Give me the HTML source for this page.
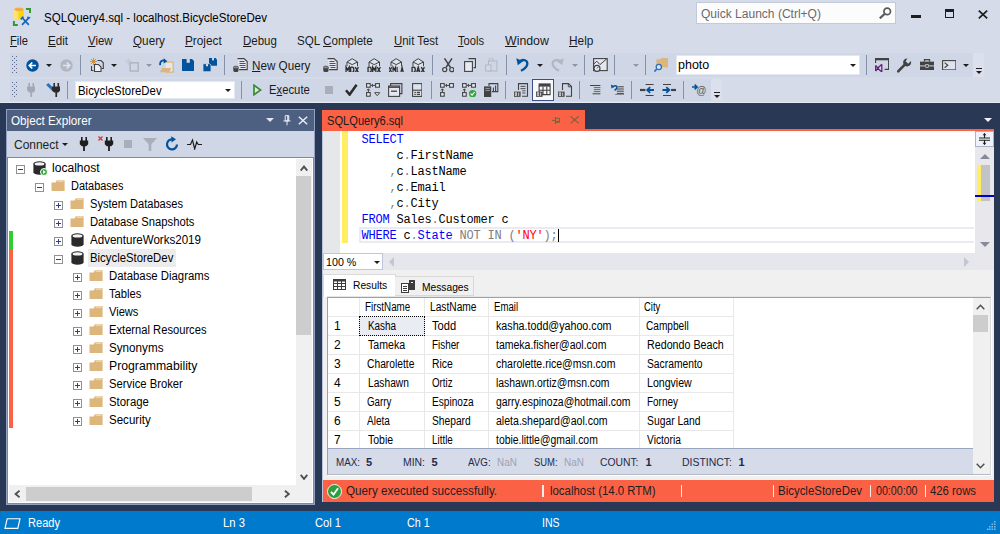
<!DOCTYPE html>
<html><head>
<meta charset="utf-8">
<title>SQLQuery4.sql - localhost.BicycleStoreDev</title>
<style>
*{box-sizing:border-box;margin:0;padding:0}
html,body{width:1000px;height:534px;overflow:hidden;background:#d6dbe9}
body{font-family:"Liberation Sans",sans-serif;font-size:12px;color:#1e1e1e;position:relative}
.a{position:absolute}
.t{position:absolute;white-space:nowrap;line-height:16px;height:16px}
u{text-decoration:underline;text-underline-offset:1px}
/* top chrome */
#chrome{left:0;top:0;width:1000px;height:103px;background:#d6dbe9}
.tb{background:#cfd6e5}
.sep{width:1px;background:#8591a9}
.grip{width:5px;background-image:radial-gradient(circle,#6d7993 0.6px,transparent 0.8px);background-size:4px 4px;background-position:0 0}
/* navy work area */
#work{left:0;top:103px;width:1000px;height:408px;background:#293955}
/* status */
#status{left:0;top:511px;width:1000px;height:23px;background:#007acc;color:#fff}
/* tree */
.tr{position:absolute;white-space:nowrap;line-height:18px;height:18px;font-size:12px;color:#000}
.bx{position:absolute;width:9px;height:9px;border:1px solid #919191;background:#fff}
.bx:before{content:"";position:absolute;left:1px;top:3px;width:5px;height:1px;background:#2b3f8c}
.bx.p:after{content:"";position:absolute;left:3px;top:1px;width:1px;height:5px;background:#2b3f8c}
.fo{position:absolute;width:14px;height:11px}
.code{position:absolute;white-space:pre;font-family:"Liberation Mono",monospace;font-size:12px;letter-spacing:-0.2px;line-height:16px;height:16px;color:#000}
.kw{color:#0000ff}.gr{color:#808080}.rd{color:#ff0000}
.g{position:absolute;white-space:nowrap;font-size:12px;line-height:19px;height:19px;color:#000}
.vl{position:absolute;width:1px;background:#e8e8e8}
.hl{position:absolute;height:1px;background:#e8e8e8}
.ag{position:absolute;white-space:nowrap;font-size:11px;line-height:22px;height:22px;color:#1e2a4a}
.ag b{color:#1e2a4a}
.ag i{font-style:normal;color:#9aa2b5}
.qs{position:absolute;white-space:nowrap;font-size:12px;line-height:22px;height:22px;color:#1e1e1e}
.qsep{position:absolute;width:1.5px;height:12px;background:#fdeee9}
</style>
</head>
<body>
<!-- ============ TOP CHROME ============ -->
<div class="a" id="chrome">
<svg class="a" style="left:12px;top:7px;width:20px;height:20px" viewBox="0 0 20 20"><path d="M1.900 2.400V11.600L6.300 12.900V4z" fill="#ffe36e"></path><path d="M6.300 4V12.900L9.500 11.300L11.900 9V2.400z" fill="#ffd500"></path><path d="M1.900 2.300L4.200 0.800H9.800L11.900 2.300L9.800 3.900H4.200Z" fill="#f3aa3e"></path>
<path d="M14 2H18V5.900" stroke="#339933" stroke-width="2" fill="none"></path><path d="M1.900 14V17.900H5.800" stroke="#339933" stroke-width="2" fill="none"></path>
<path d="M10 10.500L16.800 17.800M17.500 10.200L10 17.800" stroke="#1565c0" stroke-width="1.700" fill="none"></path><path d="M8.200 11.800L10.800 9L12 10.200L9.500 12.900Z" fill="#1565c0"></path><path d="M15.600 9.200L16.800 10.500L18.800 9.800L17 12L15 11z" fill="#1565c0"></path></svg>
<div class="t" style="left: 44px; top: 10px; font-size: 12.5px; color: rgb(0, 0, 0); transform-origin: 0px 50%; transform: scaleX(0.925);">SQLQuery4.sql - localhost.BicycleStoreDev</div>
<div class="a" style="left:696px;top:2px;width:200px;height:21.500px;background:#fcfcfd;border:1px solid #c2c9da"></div>
<div class="t" style="left: 701px; top: 6.2px; font-size: 12px; color: rgb(106, 106, 106); transform-origin: 0px 50%; transform: scaleX(1.0023);">Quick Launch (Ctrl+Q)</div>
<svg class="a" style="left:879px;top:7px;width:13px;height:12px" viewBox="0 0 13 12"><circle cx="8.2" cy="4.4" r="3.3" stroke="#5a5a5a" stroke-width="1.7" fill="none"></circle><path d="M5.8 6.8L0.8 11.4" stroke="#5a5a5a" stroke-width="2.2"></path></svg>
<div class="a" style="left:911px;top:14.5px;width:9.5px;height:3px;background:#1e1e1e"></div>
<div class="a" style="left:945px;top:9px;width:9px;height:9px;border:1px solid #1e1e1e;border-top-width:3px"></div>
<svg class="a" style="left:978px;top:10px;width:10px;height:9px" viewBox="0 0 10 9"><path d="M0.8 0.6L9.2 8.4M9.2 0.6L0.8 8.4" stroke="#1e1e1e" stroke-width="1.7"></path></svg>
<div class="t" style="left: 10px; top: 33px; font-size: 12px; color: rgb(27, 27, 27); transform-origin: 0px 50%; transform: scaleX(0.9349);"><u>F</u>ile</div>
<div class="t" style="left: 47.7px; top: 33px; font-size: 12px; color: rgb(27, 27, 27); transform-origin: 0px 50%; transform: scaleX(0.9709);"><u>E</u>dit</div>
<div class="t" style="left: 88.4px; top: 33px; font-size: 12px; color: rgb(27, 27, 27); transform-origin: 0px 50%; transform: scaleX(0.953);"><u>V</u>iew</div>
<div class="t" style="left: 133px; top: 33px; font-size: 12px; color: rgb(27, 27, 27); transform-origin: 0px 50%; transform: scaleX(0.9759);"><u>Q</u>uery</div>
<div class="t" style="left: 185.2px; top: 33px; font-size: 12px; color: rgb(27, 27, 27); transform-origin: 0px 50%; transform: scaleX(0.9824);"><u>P</u>roject</div>
<div class="t" style="left: 242.5px; top: 33px; font-size: 12px; color: rgb(27, 27, 27); transform-origin: 0px 50%; transform: scaleX(0.9583);"><u>D</u>ebug</div>
<div class="t" style="left: 297.2px; top: 33px; font-size: 12px; color: rgb(27, 27, 27); transform-origin: 0px 50%; transform: scaleX(0.9683);">SQL <u>C</u>omplete</div>
<div class="t" style="left: 393.6px; top: 33px; font-size: 12px; color: rgb(27, 27, 27); transform-origin: 0px 50%; transform: scaleX(0.9509);"><u>U</u>nit Test</div>
<div class="t" style="left: 458.4px; top: 33px; font-size: 12px; color: rgb(27, 27, 27); transform-origin: 0px 50%; transform: scaleX(0.9316);"><u>T</u>ools</div>
<div class="t" style="left: 505.1px; top: 33px; font-size: 12px; color: rgb(27, 27, 27); transform-origin: 0px 50%; transform: scaleX(1.0284);"><u>W</u>indow</div>
<div class="t" style="left: 569.1px; top: 33px; font-size: 12px; color: rgb(27, 27, 27); transform-origin: 0px 50%; transform: scaleX(0.9884);"><u>H</u>elp</div>
<div class="a tb" style="left:10px;top:53px;width:963px;height:24px"></div>
<div class="a" style="left:973px;top:53px;width:11px;height:24px;background:#dce0ec"></div>
<svg class="a" style="left:12px;top:56px;width:5px;height:18px" viewBox="0 0 5 18"><g fill="#5d6b8c"><rect x="0" y="0" width="1" height="1"></rect><rect x="4" y="0" width="1" height="1"></rect><rect x="2" y="2" width="1" height="1"></rect><rect x="6" y="2" width="1" height="1"></rect><rect x="0" y="4" width="1" height="1"></rect><rect x="4" y="4" width="1" height="1"></rect><rect x="2" y="6" width="1" height="1"></rect><rect x="6" y="6" width="1" height="1"></rect><rect x="0" y="8" width="1" height="1"></rect><rect x="4" y="8" width="1" height="1"></rect><rect x="2" y="10" width="1" height="1"></rect><rect x="6" y="10" width="1" height="1"></rect><rect x="0" y="12" width="1" height="1"></rect><rect x="4" y="12" width="1" height="1"></rect><rect x="2" y="14" width="1" height="1"></rect><rect x="6" y="14" width="1" height="1"></rect><rect x="0" y="16" width="1" height="1"></rect><rect x="4" y="16" width="1" height="1"></rect></g></svg>
<svg class="a" style="left:25.5px;top:58.5px;width:13px;height:13px" viewBox="0 0 13 13"><circle cx="6.5" cy="6.5" r="6.2" fill="#00539c"></circle><path d="M10 6.5H3.6M6.3 3.5L3.3 6.5L6.3 9.5" stroke="#fff" stroke-width="1.7" fill="none"></path></svg>
<div class="a" style="left:46px;top:64px;width:0;height:0;border-top:3px solid #1e1e1e;border-left:3px solid transparent;border-right:3px solid transparent"></div>
<svg class="a" style="left:59.7px;top:58.5px;width:13px;height:13px" viewBox="0 0 13 13"><circle cx="6.5" cy="6.5" r="6.2" fill="#b3b7c4"></circle><path d="M3 6.5h6.4M6.7 3.5L9.7 6.5L6.7 9.5" stroke="#dfe3ee" stroke-width="1.7" fill="none"></path></svg>
<div class="a sep" style="left:80px;top:55px;height:20px"></div>
<svg class="a" style="left:90px;top:58px;width:14px;height:14px" viewBox="0 0 14 14"><path d="M3.5 0v7M0 3.5h7M1 1l5 5M6 1l-5 5" stroke="#d68a1b" stroke-width="0.9"></path><path d="M7.5 2.5h3.5l2.3 2.3v5.7h-2" stroke="#424242" stroke-width="1.1" fill="none"></path><path d="M4.5 6.5h4l2.5 2.5v4.5h-6.500z" stroke="#424242" stroke-width="1.1" fill="#eef0f6"></path><path d="M1.5 8v4.5h2" stroke="#424242" stroke-width="1.1" fill="none"></path></svg>
<div class="a" style="left:111px;top:64px;width:0;height:0;border-top:3px solid #1e1e1e;border-left:3px solid transparent;border-right:3px solid transparent"></div>
<svg class="a" style="left:125px;top:58px;width:14px;height:14px" viewBox="0 0 14 14"><path d="M3.5 0v7M0 3.5h7M1 1l5 5M6 1l-5 5" stroke="#c4c8d4" stroke-width="0.9"></path><rect x="5.2" y="4.8" width="8" height="8.2" stroke="#b3b7c4" stroke-width="1.6" fill="none"></rect></svg>
<div class="a" style="left:146px;top:64px;width:0;height:0;border-top:3px solid #8f95a6;border-left:3px solid transparent;border-right:3px solid transparent"></div>
<svg class="a" style="left:158.5px;top:57.5px;width:15px;height:15px" viewBox="0 0 15 15"><path d="M6.5 4.2h7.7v10H6.5" stroke="#dcb67a" stroke-width="1.3" fill="#e4e7f0"></path><path d="M0.8 14.2L3.2 10h9.2l-2.200 4.200z" fill="#dcb67a"></path><path d="M1.2 7.2C0.500 3 3.500 1.800 6.200 2.800" stroke="#00539c" stroke-width="1.800" fill="none"></path><path d="M4.800 0.300L8.300 3.200L4.600 5.600Z" fill="#00539c"></path></svg>
<svg class="a" style="left:182px;top:58.7px;width:12px;height:12px" viewBox="0 0 12 12"><path d="M0 0h10l2 2v10H0z" fill="#00539c"></path><rect x="4.600" y="0" width="3.200" height="3.800" fill="#cfd6e5"></rect></svg>
<svg class="a" style="left:203px;top:58px;width:14px;height:14px" viewBox="0 0 14 14"><path d="M6 0h6.600l1.400 1.400v6.400H6z" fill="#00539c"></path><rect x="9" y="0" width="2" height="2.400" fill="#cfd6e5"></rect><path d="M0 5.700h6.600l1.400 1.400v6.600H0z" fill="#00539c" stroke="#cfd6e5" stroke-width="0.8"></path><rect x="3" y="5.900" width="2" height="2.400" fill="#cfd6e5"></rect></svg>
<div class="a sep" style="left:224px;top:55px;height:20px"></div>
<svg class="a" style="left:232.7px;top:57.7px;width:15px;height:14.5px" viewBox="0 0 15 14.5"><path d="M4.500 0.600h6.500l3.200 3v8h-8" stroke="#424242" stroke-width="1.1" fill="#e3e6ef"></path><path d="M6.500 3.500h5M6.500 5.500h6M6.500 7.500h6M7.500 9.500h5" stroke="#424242" stroke-width="0.9"></path><path d="M0.300 9.500v3.300a2.600 1.300 0 0 0 5.200 0V9.500z" fill="#424242"></path><ellipse cx="2.900" cy="9.400" rx="2.600" ry="1.300" fill="#8a8a8a" stroke="#424242" stroke-width="0.6"></ellipse></svg>
<div class="t" style="left: 252.2px; top: 58px; font-size: 12px; color: rgb(27, 27, 27); transform-origin: 0px 50%; transform: scaleX(0.9728);"><u>N</u>ew Query</div>
<svg class="a" style="left:322.5px;top:57.7px;width:15px;height:14.5px" viewBox="0 0 15 14.5"><path d="M4.500 0.600h6.500l3.200 3v8h-8" stroke="#424242" stroke-width="1.1" fill="#e3e6ef"></path><path d="M6.500 3.500h5M6.500 5.500h6M6.500 7.500h6M7.500 9.500h5" stroke="#424242" stroke-width="0.9"></path><path d="M0.300 9.500v3.300a2.600 1.300 0 0 0 5.200 0V9.500z" fill="#424242"></path><ellipse cx="2.900" cy="9.400" rx="2.600" ry="1.300" fill="#8a8a8a" stroke="#424242" stroke-width="0.6"></ellipse></svg>
<svg class="a" style="left:344.7px;top:57.7px;width:14.5px;height:14.5px" viewBox="0 0 14.5 14.5"><path d="M2 8.200V4L7.200 0.700L12.500 4V8.200" stroke="#424242" stroke-width="1" fill="#dfe3ee"></path><path d="M2 4L7.200 6.600L12.500 4" stroke="#424242" stroke-width="1" fill="none"></path><g stroke="#2e2e2e" stroke-width="1.300" fill="none"><path transform="translate(1.05 9.100) scale(1.0 1.080)" d="M0 5V0L1.6 2.6L3.200 0V5"></path><path transform="translate(5.65 9.100) scale(1.0 1.080)" d="M0 0V5H1.400Q3.200 5 3.200 2.500Q3.200 0 1.400 0H0"></path><path transform="translate(10.25 9.100) scale(1.0 1.080)" d="M0 0L3.200 5M3.200 0L0 5"></path></g></svg>
<svg class="a" style="left:366.7px;top:57.7px;width:14.5px;height:14.5px" viewBox="0 0 14.5 14.5"><path d="M2 8.200V4L7.200 0.700L12.500 4V8.200" stroke="#424242" stroke-width="1" fill="#dfe3ee"></path><path d="M2 4L7.200 6.600L12.500 4" stroke="#424242" stroke-width="1" fill="none"></path><g stroke="#2e2e2e" stroke-width="1.300" fill="none"><path transform="translate(1.05 9.100) scale(1.0 1.080)" d="M0 0V5H1.400Q3.200 5 3.200 2.500Q3.200 0 1.400 0H0"></path><path transform="translate(5.65 9.100) scale(1.0 1.080)" d="M0 5V0L1.6 2.6L3.200 0V5"></path><path transform="translate(10.25 9.100) scale(1.0 1.080)" d="M0 0L3.200 5M3.200 0L0 5"></path></g></svg>
<svg class="a" style="left:389px;top:57.7px;width:14.5px;height:14.5px" viewBox="0 0 14.5 14.5"><path d="M2 8.200V4L7.200 0.700L12.500 4V8.200" stroke="#424242" stroke-width="1" fill="#dfe3ee"></path><path d="M2 4L7.200 6.600L12.500 4" stroke="#424242" stroke-width="1" fill="none"></path><g stroke="#2e2e2e" stroke-width="1.300" fill="none"><path transform="translate(0.09 9.100) scale(0.82 1.080)" d="M0 0L3.200 5M3.200 0L0 5"></path><path transform="translate(3.99 9.100) scale(0.82 1.080)" d="M0 5V0L1.6 2.6L3.200 0V5"></path><path transform="translate(7.89 9.100) scale(0.82 1.080)" d="M0.300 0V5H2.800"></path><path transform="translate(11.79 9.100) scale(0.82 1.080)" d="M0 5L1.600 0L3.200 5M0.700 3.400H2.500"></path></g></svg>
<svg class="a" style="left:411px;top:57.7px;width:14.5px;height:14.5px" viewBox="0 0 14.5 14.5"><path d="M2 8.200V4L7.200 0.700L12.500 4V8.200" stroke="#424242" stroke-width="1" fill="#dfe3ee"></path><path d="M2 4L7.200 6.600L12.500 4" stroke="#424242" stroke-width="1" fill="none"></path><g stroke="#2e2e2e" stroke-width="1.300" fill="none"><path transform="translate(1.05 9.100) scale(1.0 1.080)" d="M0 0V5H1.400Q3.200 5 3.200 2.500Q3.200 0 1.400 0H0"></path><path transform="translate(5.65 9.100) scale(1.0 1.080)" d="M0 5L1.600 0L3.200 5M0.700 3.400H2.500"></path><path transform="translate(10.25 9.100) scale(1.0 1.080)" d="M0 0L3.200 5M3.200 0L0 5"></path></g></svg>
<div class="a sep" style="left:432px;top:55px;height:20px"></div>
<svg class="a" style="left:441.7px;top:58px;width:12.5px;height:14.5px" viewBox="0 0 12.5 14.5"><path d="M2.500 0.300L8.500 9.500M10 0.300L4 9.500" stroke="#424242" stroke-width="1.400" fill="none"></path><circle cx="2.700" cy="11.600" r="2.100" stroke="#424242" stroke-width="1.200" fill="none"></circle><circle cx="9.800" cy="11.600" r="2.100" stroke="#424242" stroke-width="1.200" fill="none"></circle></svg>
<svg class="a" style="left:464px;top:57.7px;width:12px;height:14px" viewBox="0 0 12 14"><path d="M4.500 0.600h7v9h-2" stroke="#424242" stroke-width="1.100" fill="none"></path><rect x="0.600" y="3.600" width="7.800" height="9.800" stroke="#424242" stroke-width="1.100" fill="#e8ebf3"></rect></svg>
<svg class="a" style="left:485px;top:58px;width:12.5px;height:13.5px" viewBox="0 0 12.5 13.5"><path d="M4.200 3V1.600a2 1.600 0 0 1 4 0V3" stroke="#b3b7c4" stroke-width="1" fill="none"></path><rect x="3.500" y="3" width="8.400" height="10" stroke="#b3b7c4" stroke-width="1" fill="none"></rect><rect x="0.600" y="7" width="5.400" height="6" stroke="#b3b7c4" stroke-width="1" fill="#d4d9e6"></rect></svg>
<div class="a sep" style="left:506px;top:55px;height:20px"></div>
<svg class="a" style="left:515.7px;top:57.3px;width:13px;height:14.5px" viewBox="0 0 13 14.5"><path d="M3 5C7 1.500 12 3 11.200 7.500C10.600 10.500 7.500 12.500 5 13.800" stroke="#00539c" stroke-width="2.300" fill="none"></path><path d="M0.300 1.200L1.800 8.200L7 4.200Z" fill="#00539c"></path></svg>
<div class="a" style="left:537px;top:64px;width:0;height:0;border-top:3px solid #1e1e1e;border-left:3px solid transparent;border-right:3px solid transparent"></div>
<svg class="a" style="left:550.5px;top:57.3px;width:13px;height:14.5px" viewBox="0 0 13 14.5"><path d="M10 5C6 1.500 1 3 1.800 7.500C2.400 10.500 5.500 12.500 8 13.800" stroke="#b3b7c4" stroke-width="2.300" fill="none"></path><path d="M12.700 1.200L11.200 8.200L6 4.200Z" fill="#b3b7c4"></path></svg>
<div class="a" style="left:572px;top:64px;width:0;height:0;border-top:3px solid #8f95a6;border-left:3px solid transparent;border-right:3px solid transparent"></div>
<div class="a sep" style="left:584px;top:55px;height:20px"></div>
<svg class="a" style="left:592.5px;top:58px;width:15px;height:14px" viewBox="0 0 15 14"><rect x="0.600" y="0.600" width="13.600" height="12" stroke="#424242" stroke-width="1.100" fill="#e4e7f0"></rect><path d="M0.800 6L3.800 3.200L7 6.600L13.800 0.800" stroke="#424242" stroke-width="1" fill="none"></path><circle cx="4" cy="10.400" r="3" stroke="#424242" stroke-width="1.100" fill="#e4e7f0"></circle><path d="M4 10.400L5.600 8.600" stroke="#424242" stroke-width="0.900"></path></svg>
<div class="a sep" style="left:614px;top:55px;height:20px"></div>
<div class="a" style="left:633px;top:64px;width:0;height:0;border-top:3px solid #8f95a6;border-left:3px solid transparent;border-right:3px solid transparent"></div>
<div class="a sep" style="left:645px;top:55px;height:20px"></div>
<svg class="a" style="left:654px;top:58px;width:14.5px;height:14px" viewBox="0 0 14.5 14"><path d="M2.400 1.200h4l1-1.200h6.600v9.400H2.400z" fill="#dcb67a"></path><circle cx="4.800" cy="9" r="2.600" stroke="#2a6fc0" stroke-width="1.300" fill="#dfe6f4"></circle><path d="M2.800 11L0.400 13.600" stroke="#2a6fc0" stroke-width="1.700"></path></svg>
<div class="a" style="left:675.5px;top:54.7px;width:184px;height:20.600px;background:#fff;border:1px solid #e3e7f0"></div>
<div class="t" style="left: 678.3px; top: 57px; font-size: 12px; color: rgb(0, 0, 0); transform-origin: 0px 50%; transform: scaleX(1.0422);">photo</div>
<div class="a" style="left:850.4px;top:64px;width:0;height:0;border-top:3px solid #1e1e1e;border-left:3px solid transparent;border-right:3px solid transparent"></div>
<div class="a sep" style="left:866px;top:55px;height:20px"></div>
<svg class="a" style="left:874.7px;top:58px;width:14.5px;height:14px" viewBox="0 0 14.5 14"><path d="M0.600 5V0.600h13v10.800h-4" stroke="#424242" stroke-width="1.100" fill="none"></path><path d="M0.600 1.400h13" stroke="#424242" stroke-width="1.800"></path><path d="M0.600 7.500L3.200 10.300L0.600 13.100M0.600 7.500v5.600M6.800 6.200L2.600 10.300L6.800 14M6.800 6.200V14" stroke="#68217a" stroke-width="1.300" fill="none"></path></svg>
<svg class="a" style="left:896.5px;top:58px;width:15px;height:14.5px" viewBox="0 0 15 14.5"><path d="M1.200 13.300L8 6.300" stroke="#424242" stroke-width="2.600" stroke-linecap="round"></path><path d="M13.900 3.100a4 4 0 1 1-3.400-2.700L8.600 3.200l2.600 2.500z" fill="#424242"></path></svg>
<svg class="a" style="left:919.5px;top:58.7px;width:14px;height:11.5px" viewBox="0 0 14 11.5"><path d="M4.500 2.600V0.700h5v1.900" stroke="#424242" stroke-width="1.300" fill="none"></path><rect x="0" y="2.600" width="14" height="3.800" fill="#424242"></rect><rect x="0" y="7.400" width="14" height="4.100" fill="#424242"></rect><rect x="5.800" y="5.400" width="2.400" height="3" fill="#424242" stroke="#cfd6e5" stroke-width="0.700"></rect></svg>
<svg class="a" style="left:941.7px;top:59.7px;width:14.5px;height:10.5px" viewBox="0 0 14.5 10.5"><rect x="0.600" y="0.600" width="13.300" height="9.300" stroke="#424242" stroke-width="1.100" fill="#dfe3ee"></rect><path d="M2.600 2.600L5.800 5.200L2.600 7.800" stroke="#424242" stroke-width="1.100" fill="none"></path></svg>
<div class="a" style="left:963px;top:64px;width:0;height:0;border-top:3px solid #1e1e1e;border-left:3px solid transparent;border-right:3px solid transparent"></div>
<div class="a" style="left:975.7px;top:68px;width:6.4px;height:1.300px;background:#1e1e1e"></div>
<div class="a" style="left:975.9px;top:71px;width:0;height:0;border-top:3px solid #1e1e1e;border-left:3px solid transparent;border-right:3px solid transparent"></div>
<div class="a tb" style="left:10px;top:79px;width:701px;height:22px"></div>
<div class="a" style="left:711px;top:79px;width:11px;height:22px;background:#dce0ec"></div>
<svg class="a" style="left:12px;top:82px;width:5px;height:16px" viewBox="0 0 5 16"><g fill="#5d6b8c"><rect x="0" y="0" width="1" height="1"></rect><rect x="4" y="0" width="1" height="1"></rect><rect x="2" y="2" width="1" height="1"></rect><rect x="6" y="2" width="1" height="1"></rect><rect x="0" y="4" width="1" height="1"></rect><rect x="4" y="4" width="1" height="1"></rect><rect x="2" y="6" width="1" height="1"></rect><rect x="6" y="6" width="1" height="1"></rect><rect x="0" y="8" width="1" height="1"></rect><rect x="4" y="8" width="1" height="1"></rect><rect x="2" y="10" width="1" height="1"></rect><rect x="6" y="10" width="1" height="1"></rect><rect x="0" y="12" width="1" height="1"></rect><rect x="4" y="12" width="1" height="1"></rect><rect x="2" y="14" width="1" height="1"></rect><rect x="6" y="14" width="1" height="1"></rect></g></svg>
<svg class="a" style="left:26.7px;top:83px;width:8.5px;height:14px" viewBox="0 0 8.5 14"><path d="M1.400 0h1.600v3.600H1.400zM5.500 0h1.600v3.600H5.500zM0 3.600h8.500v3.600l-2.200 2.200H2.200L0 7.200zM3.400 9h1.700v5H3.400z" fill="#a4a8b4"></path></svg>
<svg class="a" style="left:46px;top:82.5px;width:9.5px;height:9.5px" viewBox="0 0 9.5 9.5"><path d="M0.200 1.900L2.300 0L9 6.400L9.500 9.300L6.800 8.400Z" fill="#2a6fc0"></path></svg>
<svg class="a" style="left:51.7px;top:83px;width:8.5px;height:14px" viewBox="0 0 8.5 14"><path d="M1.400 0h1.600v3.600H1.400zM5.500 0h1.600v3.600H5.500zM0 3.600h8.500v3.600l-2.200 2.200H2.200L0 7.200zM3.400 9h1.700v5H3.400z" fill="#2b2b2b"></path></svg>
<div class="a sep" style="left:67px;top:81px;height:18px"></div>
<div class="a" style="left:75.300px;top:80.800px;width:159.400px;height:18.400px;background:#fff;border:1px solid #e3e7f0"></div>
<div class="t" style="left: 78.3px; top: 82.6px; font-size: 12px; color: rgb(0, 0, 0); transform-origin: 0px 50%; transform: scaleX(0.9497);">BicycleStoreDev</div>
<div class="a" style="left:225.3px;top:89.4px;width:0;height:0;border-top:3px solid #1e1e1e;border-left:3px solid transparent;border-right:3px solid transparent"></div>
<div class="a sep" style="left:241px;top:81px;height:18px"></div>
<svg class="a" style="left:252.5px;top:84px;width:9px;height:12px" viewBox="0 0 9 12"><path d="M1 1.300L7.600 6L1 10.700Z" stroke="#388a34" stroke-width="1.700" fill="#dfe8e0" stroke-linejoin="miter"></path></svg>
<div class="t" style="left: 269.4px; top: 82px; font-size: 12px; color: rgb(27, 27, 27); transform-origin: 0px 50%; transform: scaleX(0.9406);">E<u>x</u>ecute</div>
<div class="a" style="left:325px;top:86.300px;width:7.700px;height:7.500px;background:#a9aeb9"></div>
<svg class="a" style="left:345px;top:84px;width:12.5px;height:12px" viewBox="0 0 12.5 12"><path d="M1 6.200L4.600 10.600L11.600 0.800" stroke="#2b2b2b" stroke-width="2.500" fill="none"></path></svg>
<svg class="a" style="left:366px;top:83px;width:14.5px;height:14px" viewBox="0 0 14.5 14"><rect x="0.600" y="0.600" width="3.600" height="3.600" stroke="#424242" stroke-width="1.100" fill="#eef0f6"></rect><rect x="9.600" y="0.600" width="3.800" height="3.600" stroke="#424242" stroke-width="1.100" fill="#eef0f6"></rect><rect x="0.600" y="9.600" width="3.600" height="3.600" stroke="#424242" stroke-width="1.100" fill="#eef0f6"></rect><path d="M9.600 2.400H5.600M7 1L5.400 2.400L7 3.800M2.400 9.600V6M1 7.400L2.400 5.800L3.800 7.400" stroke="#424242" stroke-width="1" fill="none"></path><path d="M8.700 9.700h5l-2.500 3z" stroke="#424242" stroke-width="1" fill="#eef0f6"></path></svg>
<svg class="a" style="left:388px;top:83px;width:14.5px;height:14px" viewBox="0 0 14.5 14"><path d="M2.600 3V0.600h11.300v10h-2.400" stroke="#424242" stroke-width="1.100" fill="none"></path><rect x="0.600" y="3" width="11" height="10.400" stroke="#424242" stroke-width="1.100" fill="#e4e7f0"></rect><path d="M0.600 4.200h11" stroke="#424242" stroke-width="1.400"></path><path d="M3 8.200h6" stroke="#424242" stroke-width="1.300"></path></svg>
<svg class="a" style="left:411.5px;top:83px;width:10.5px;height:14px" viewBox="0 0 10.5 14"><rect x="0.600" y="0.600" width="9.300" height="12.800" stroke="#424242" stroke-width="1.100" fill="#dfe3ee"></rect><path d="M0.600 7.200h9.300" stroke="#424242" stroke-width="1.100"></path><path d="M2.400 9.400h1.400M4.800 9.400h3.200M2.400 11.400h1.400M4.800 11.400h3.200" stroke="#424242" stroke-width="1.100"></path></svg>
<div class="a sep" style="left:431px;top:81px;height:18px"></div>
<svg class="a" style="left:440px;top:83px;width:14.5px;height:14px" viewBox="0 0 14.5 14"><rect x="0.600" y="0.600" width="3.600" height="3.600" stroke="#424242" stroke-width="1.100" fill="#eef0f6"></rect><rect x="9.600" y="0.600" width="3.800" height="3.600" stroke="#424242" stroke-width="1.100" fill="#eef0f6"></rect><rect x="0.600" y="9.600" width="3.600" height="3.600" stroke="#424242" stroke-width="1.100" fill="#eef0f6"></rect><path d="M9.600 2.400H5.600M7 1L5.400 2.400L7 3.800M2.400 9.600V6M1 7.400L2.400 5.800L3.800 7.400" stroke="#424242" stroke-width="1" fill="none"></path></svg>
<svg class="a" style="left:462px;top:83px;width:14.5px;height:14px" viewBox="0 0 14.5 14"><rect x="0.600" y="0.600" width="3.600" height="3.600" stroke="#424242" stroke-width="1.100" fill="#eef0f6"></rect><rect x="9.600" y="0.600" width="3.800" height="3.600" stroke="#424242" stroke-width="1.100" fill="#eef0f6"></rect><rect x="0.600" y="9.600" width="3.600" height="3.600" stroke="#424242" stroke-width="1.100" fill="#eef0f6"></rect><path d="M9.600 2.400H5.600M7 1L5.400 2.400L7 3.800M2.400 9.600V6M1 7.400L2.400 5.800L3.800 7.400" stroke="#424242" stroke-width="1" fill="none"></path><circle cx="10.600" cy="10.600" r="3.700" fill="#2fa83a"></circle><path d="M8.600 10.600L10.100 12.200L12.600 9" stroke="#fff" stroke-width="1.200" fill="none"></path></svg>
<svg class="a" style="left:484px;top:83px;width:14.5px;height:14px" viewBox="0 0 14.5 14"><rect x="0" y="3.400" width="7.200" height="10.600" fill="#424242"></rect><path d="M1.400 5.400h4.400M1.400 7.400h4.400" stroke="#aeb4c4" stroke-width="0.800"></path><path d="M5 3V0.600h8.800v8h-6" stroke="#424242" stroke-width="1.100" fill="none"></path><path d="M9.400 8.400V4.400M11.600 8.400V2.600" stroke="#424242" stroke-width="1.100"></path></svg>
<div class="a sep" style="left:505px;top:81px;height:18px"></div>
<svg class="a" style="left:514px;top:83px;width:14.5px;height:14px" viewBox="0 0 14.5 14"><path d="M4.500 7V0.600h9v12.600H8" stroke="#424242" stroke-width="1.100" fill="none"></path><path d="M6.500 3.400h5M6.500 5.600h5M8.200 7.800h3.300M8.200 10h3.300" stroke="#424242" stroke-width="0.900"></path><rect x="0" y="8.6" width="6.600" height="5.200" fill="#424242"></rect><rect x="1.2" y="9.799999999999999" width="1.500" height="2.800" stroke="#f2f2f2" stroke-width="0.750" fill="none"></rect><path d="M4.7 9.5v3.400" stroke="#f2f2f2" stroke-width="0.850"></path></svg>
<div class="a" style="left:532px;top:79px;width:22px;height:22px;background:#f6f8fc;border:1px solid #3b4f81"></div>
<svg class="a" style="left:535.5px;top:83px;width:15px;height:14px" viewBox="0 0 15 14"><rect x="2.600" y="0.400" width="12" height="3.200" fill="#424242"></rect><path d="M3.100 3v8.600h11V3M3.100 7.300h11M7 3.400v8M10.800 3.400v8" stroke="#424242" stroke-width="1.100" fill="none"></path><rect x="0" y="8.6" width="6.600" height="5.200" fill="#424242"></rect><rect x="1.2" y="9.799999999999999" width="1.500" height="2.800" stroke="#f2f2f2" stroke-width="0.750" fill="none"></rect><path d="M4.7 9.5v3.400" stroke="#f2f2f2" stroke-width="0.850"></path></svg>
<svg class="a" style="left:558px;top:83px;width:14.5px;height:14px" viewBox="0 0 14.5 14"><path d="M4.500 7V0.600h6l3 3v9.600H8" stroke="#424242" stroke-width="1.100" fill="none"></path><path d="M10.300 0.800v3h3" stroke="#424242" stroke-width="0.900" fill="none"></path><rect x="0" y="8.6" width="6.600" height="5.200" fill="#424242"></rect><rect x="1.2" y="9.799999999999999" width="1.500" height="2.800" stroke="#f2f2f2" stroke-width="0.750" fill="none"></rect><path d="M4.7 9.5v3.400" stroke="#f2f2f2" stroke-width="0.850"></path></svg>
<div class="a sep" style="left:579px;top:81px;height:18px"></div>
<svg class="a" style="left:590px;top:85px;width:10.5px;height:9.5px" viewBox="0 0 10.5 9.5"><path d="M0 0.500h3" stroke="#424242" stroke-width="1"></path><path d="M2.600 0.500h7.800M2.600 8.800h7.800" stroke="#424242" stroke-width="1"></path><path d="M3.800 2.600h6.600M3.800 4.600h6.600M3.800 6.600h6.600" stroke="#388a34" stroke-width="1"></path></svg>
<svg class="a" style="left:610.5px;top:83.7px;width:13px;height:11.5px" viewBox="0 0 13 11.5"><path d="M1.800 3.200C4 0.500 7 2.400 5.600 4.400C5 5.300 4.200 5.800 3.600 6.400" stroke="#00539c" stroke-width="1.500" fill="none"></path><path d="M0 0.400L0.400 4.400L3.600 2.200Z" fill="#00539c"></path><path d="M6.800 2.800h6M5.800 5h7M5.800 7.200h7M5.800 9.400h7" stroke="#424242" stroke-width="1"></path><path d="M4 11h9" stroke="#424242" stroke-width="1"></path></svg>
<div class="a sep" style="left:631px;top:81px;height:18px"></div>
<svg class="a" style="left:640px;top:83.7px;width:14.5px;height:12px" viewBox="0 0 14.5 12"><path d="M5.600 0.500h8M5.600 11.500h8" stroke="#424242" stroke-width="1"></path><path d="M0 6h5.400" stroke="#424242" stroke-width="2.200"></path><path d="M14 6H7.600M10.200 3.200L7.200 6L10.200 8.800" stroke="#00539c" stroke-width="1.800" fill="none"></path></svg>
<svg class="a" style="left:661.7px;top:83.7px;width:14.5px;height:12px" viewBox="0 0 14.5 12"><path d="M1 0.500h8M1 11.500h8" stroke="#424242" stroke-width="1"></path><path d="M9.100 6h5.400" stroke="#424242" stroke-width="2.200"></path><path d="M0.500 6h6.400M4.300 3.200L7.300 6L4.300 8.800" stroke="#00539c" stroke-width="1.800" fill="none"></path></svg>
<div class="a sep" style="left:683px;top:81px;height:18px"></div>
<svg class="a" style="left:692px;top:84px;width:14.5px;height:12px" viewBox="0 0 14.5 12"><path d="M0 3h4.600M2.600 0.600L5.200 3L2.600 5.400" stroke="#00539c" stroke-width="1.500" fill="none"></path><text x="9.300" y="10" font-family="Liberation Sans" font-size="10" text-anchor="middle" fill="#5a5a5a">@</text></svg>
<div class="a" style="left:714px;top:92px;width:6.400px;height:1.300px;background:#1e1e1e"></div>
<div class="a" style="left:714.2px;top:95px;width:0;height:0;border-top:3px solid #1e1e1e;border-left:3px solid transparent;border-right:3px solid transparent"></div>
<div class="a" style="left:0;top:102px;width:1000px;height:1px;background:#e4e8f3"></div>
</div>

<!-- ============ WORK AREA ============ -->
<div class="a" id="work"></div>

<!-- Object explorer -->
<div class="a" id="oe" style="left:6px;top:109px;width:309px;height:396px;background:#fff;border:1px solid #93a0c2"></div>
<div class="a" style="left:7px;top:157px;width:307px;height:347px;background:#fff;border:1px solid #828790"></div>
<div class="a" style="left:7px;top:110px;width:307px;height:21px;background:#4d6082"></div>
<div class="t" style="left: 11px; top: 113px; font-size: 12px; color: rgb(255, 255, 255); transform-origin: 0px 50%; transform: scaleX(0.9746);">Object Explorer</div>
<div class="a" style="left:266px;top:118px;width:0;height:0;border-top:4px solid #dfe4f0;border-left:4px solid transparent;border-right:4px solid transparent"></div>
<svg class="a" style="left:282.500px;top:115px;width:8px;height:11px" viewBox="0 0 9 12"><path d="M2.5 0.5h4v6h-4zM0.5 6.5h8M4.5 6.5v5" stroke="#e9edf6" stroke-width="1.1" fill="none"></path><path d="M5.5 0.5v6" stroke="#e9edf6" stroke-width="1.6"></path></svg>
<svg class="a" style="left:298px;top:115.600px;width:10px;height:9px" viewBox="0 0 10 10" preserveAspectRatio="none"><path d="M0.8 0.8L9.2 9.2M9.2 0.8L0.8 9.2" stroke="#e9edf6" stroke-width="1.4"></path></svg>
<div class="a" style="left:7px;top:131px;width:307px;height:26px;background:#cfd6e5"></div>
<div class="t" style="left: 13.7px; top: 137px; font-size: 12px; color: rgb(30, 30, 30); transform-origin: 0px 50%; transform: scaleX(0.9977);">Connect</div>
<div class="a" style="left:62px;top:143px;width:0;height:0;border-top:3px solid #1e1e1e;border-left:3px solid transparent;border-right:3px solid transparent"></div>
<!-- oe toolbar icons -->
<svg class="a" style="left:79px;top:137px;width:10px;height:14px" viewBox="0 0 10 14"><path d="M2 0h1.6v3.5H2zM6.4 0H8v3.5H6.4zM0.8 3.5h8.4v3.8l-2 2H2.8l-2-2zM4.1 9h1.8v5H4.1z" fill="#1e1e1e"></path></svg>
<svg class="a" style="left:98px;top:136px;width:16px;height:15px" viewBox="0 0 16 15"><path d="M0.5 0.5L4.5 4.5M4.5 0.5L0.5 4.5" stroke="#d0342c" stroke-width="1.2"></path><path d="M8 1h1.6v3.5H8zM12.4 1H14v3.5h-1.6zM6.8 4.5h8.4v3.8l-2 2H8.8l-2-2zM10.1 10h1.8v5h-1.8z" fill="#1e1e1e"></path></svg>
<div class="a" style="left:124px;top:140px;width:8px;height:8px;background:#a9aeb9"></div>
<svg class="a" style="left:143px;top:138px;width:14px;height:13px" viewBox="0 0 14 13"><path d="M0 0h14L8.3 6.2V13H5.7V6.2Z" fill="#a9aeb9"></path></svg>
<svg class="a" style="left:165px;top:136px;width:14px;height:15px" viewBox="0 0 14 15"><path d="M8.5 3.6A5 5 0 1 0 12 8.4" stroke="#00539c" stroke-width="2.2" fill="none"></path><path d="M6.2 0.2L11 3.2L6.6 6.6Z" fill="#00539c"></path></svg>
<svg class="a" style="left:187px;top:138px;width:15px;height:12px" viewBox="0 0 15 12"><path d="M0 6.5h3.5L5.5 2l2.2 9 2-7 1.5 2.5H15" stroke="#1e1e1e" stroke-width="1.2" fill="none"></path></svg>
<!-- tree area -->
<div class="a" style="left:9px;top:231px;width:4px;height:18px;background:#32cd32"></div>
<div class="a" style="left:9px;top:249px;width:4px;height:179px;background:#fb6145"></div>
<div class="bx" style="left:16px;top:165px"></div>
<svg class="a" style="left:33px;top:161px;width:13px;height:14px" viewBox="0 0 13 14"><path d="M0.4 2.8 V11.2 A6.1 2.6 0 0 0 12.6 11.2 V2.8 Z" fill="#2a2a2a"></path><ellipse cx="6.5" cy="2.8" rx="6.1" ry="2.6" fill="#2a2a2a"></ellipse><ellipse cx="6.5" cy="2.9" rx="4.9" ry="1.7" fill="#f4f4f4"></ellipse></svg>
<div class="a" style="left:40px;top:168px;width:8px;height:8px;border-radius:4px;background:#2fa83a;border:1px solid #fff"></div>
<div class="a" style="left:43px;top:170px;width:0;height:0;border-left:3px solid #fff;border-top:2px solid transparent;border-bottom:2px solid transparent"></div>
<div class="tr" style="left: 52px; top: 159px; transform-origin: 0px 50%; transform: scaleX(1.0069);">localhost</div>
<div class="bx" style="left:35px;top:183px"></div>
<svg class="fo" style="left:51px;top:180px" viewBox="0 0 14 11"><path d="M0.5 2.6 L4.6 2.6 L5.8 0.2 L13.6 0.2 L13.6 11 L0.5 11 Z" fill="#dcb67a"></path><path d="M6.6 1.2 H12.6" stroke="#f6ead4" stroke-width="0.9"></path></svg>
<div class="tr" style="left: 71px; top: 177px; transform-origin: 0px 50%; transform: scaleX(0.9133);">Databases</div>
<div class="bx p" style="left:54px;top:201px"></div>
<svg class="fo" style="left:70px;top:198px" viewBox="0 0 14 11"><path d="M0.5 2.6 L4.6 2.6 L5.8 0.2 L13.6 0.2 L13.6 11 L0.5 11 Z" fill="#dcb67a"></path><path d="M6.6 1.2 H12.6" stroke="#f6ead4" stroke-width="0.9"></path></svg>
<div class="tr" style="left: 90px; top: 195px; transform-origin: 0px 50%; transform: scaleX(0.9234);">System Databases</div>
<div class="bx p" style="left:54px;top:219px"></div>
<svg class="fo" style="left:70px;top:216px" viewBox="0 0 14 11"><path d="M0.5 2.6 L4.6 2.6 L5.8 0.2 L13.6 0.2 L13.6 11 L0.5 11 Z" fill="#dcb67a"></path><path d="M6.6 1.2 H12.6" stroke="#f6ead4" stroke-width="0.9"></path></svg>
<div class="tr" style="left: 90px; top: 213px; transform-origin: 0px 50%; transform: scaleX(0.937);">Database Snapshots</div>
<div class="bx p" style="left:54px;top:237px"></div>
<svg class="a" style="left:71px;top:233px;width:13px;height:14px" viewBox="0 0 13 14"><path d="M0.4 2.8 V11.2 A6.1 2.6 0 0 0 12.6 11.2 V2.8 Z" fill="#2a2a2a"></path><ellipse cx="6.5" cy="2.8" rx="6.1" ry="2.6" fill="#2a2a2a"></ellipse><ellipse cx="6.5" cy="2.9" rx="4.9" ry="1.7" fill="#f4f4f4"></ellipse></svg>
<div class="tr" style="left: 90px; top: 231px; transform-origin: 0px 50%; transform: scaleX(0.9636);">AdventureWorks2019</div>
<div class="bx" style="left:54px;top:255px"></div>
<svg class="a" style="left:71px;top:251px;width:13px;height:14px" viewBox="0 0 13 14"><path d="M0.4 2.8 V11.2 A6.1 2.6 0 0 0 12.6 11.2 V2.8 Z" fill="#2a2a2a"></path><ellipse cx="6.5" cy="2.8" rx="6.1" ry="2.6" fill="#2a2a2a"></ellipse><ellipse cx="6.5" cy="2.9" rx="4.9" ry="1.7" fill="#f4f4f4"></ellipse></svg>
<div class="a" style="left:88px;top:249px;width:88px;height:18px;background:#ececec"></div>
<div class="tr" style="left: 90px; top: 249px; transform-origin: 0px 50%; transform: scaleX(0.9463);">BicycleStoreDev</div>
<div class="bx p" style="left:73px;top:273px"></div>
<svg class="fo" style="left:89px;top:270px" viewBox="0 0 14 11"><path d="M0.5 2.6 L4.6 2.6 L5.8 0.2 L13.6 0.2 L13.6 11 L0.5 11 Z" fill="#dcb67a"></path><path d="M6.6 1.2 H12.6" stroke="#f6ead4" stroke-width="0.9"></path></svg>
<div class="tr" style="left: 109px; top: 267px; transform-origin: 0px 50%; transform: scaleX(0.9466);">Database Diagrams</div>
<div class="bx p" style="left:73px;top:291px"></div>
<svg class="fo" style="left:89px;top:288px" viewBox="0 0 14 11"><path d="M0.5 2.6 L4.6 2.6 L5.8 0.2 L13.6 0.2 L13.6 11 L0.5 11 Z" fill="#dcb67a"></path><path d="M6.6 1.2 H12.6" stroke="#f6ead4" stroke-width="0.9"></path></svg>
<div class="tr" style="left: 109px; top: 285px; transform-origin: 0px 50%; transform: scaleX(0.9341);">Tables</div>
<div class="bx p" style="left:73px;top:309px"></div>
<svg class="fo" style="left:89px;top:306px" viewBox="0 0 14 11"><path d="M0.5 2.6 L4.6 2.6 L5.8 0.2 L13.6 0.2 L13.6 11 L0.5 11 Z" fill="#dcb67a"></path><path d="M6.6 1.2 H12.6" stroke="#f6ead4" stroke-width="0.9"></path></svg>
<div class="tr" style="left: 109px; top: 303px; transform-origin: 0px 50%; transform: scaleX(0.9246);">Views</div>
<div class="bx p" style="left:73px;top:327px"></div>
<svg class="fo" style="left:89px;top:324px" viewBox="0 0 14 11"><path d="M0.5 2.6 L4.6 2.6 L5.8 0.2 L13.6 0.2 L13.6 11 L0.5 11 Z" fill="#dcb67a"></path><path d="M6.6 1.2 H12.6" stroke="#f6ead4" stroke-width="0.9"></path></svg>
<div class="tr" style="left: 109px; top: 321px; transform-origin: 0px 50%; transform: scaleX(0.9311);">External Resources</div>
<div class="bx p" style="left:73px;top:345px"></div>
<svg class="fo" style="left:89px;top:342px" viewBox="0 0 14 11"><path d="M0.5 2.6 L4.6 2.6 L5.8 0.2 L13.6 0.2 L13.6 11 L0.5 11 Z" fill="#dcb67a"></path><path d="M6.6 1.2 H12.6" stroke="#f6ead4" stroke-width="0.9"></path></svg>
<div class="tr" style="left: 109px; top: 339px; transform-origin: 0px 50%; transform: scaleX(0.9727);">Synonyms</div>
<div class="bx p" style="left:73px;top:363px"></div>
<svg class="fo" style="left:89px;top:360px" viewBox="0 0 14 11"><path d="M0.5 2.6 L4.6 2.6 L5.8 0.2 L13.6 0.2 L13.6 11 L0.5 11 Z" fill="#dcb67a"></path><path d="M6.6 1.2 H12.6" stroke="#f6ead4" stroke-width="0.9"></path></svg>
<div class="tr" style="left: 109px; top: 357px; transform-origin: 0px 50%; transform: scaleX(1.0196);">Programmability</div>
<div class="bx p" style="left:73px;top:381px"></div>
<svg class="fo" style="left:89px;top:378px" viewBox="0 0 14 11"><path d="M0.5 2.6 L4.6 2.6 L5.8 0.2 L13.6 0.2 L13.6 11 L0.5 11 Z" fill="#dcb67a"></path><path d="M6.6 1.2 H12.6" stroke="#f6ead4" stroke-width="0.9"></path></svg>
<div class="tr" style="left: 109px; top: 375px; transform-origin: 0px 50%; transform: scaleX(0.9377);">Service Broker</div>
<div class="bx p" style="left:73px;top:399px"></div>
<svg class="fo" style="left:89px;top:396px" viewBox="0 0 14 11"><path d="M0.5 2.6 L4.6 2.6 L5.8 0.2 L13.6 0.2 L13.6 11 L0.5 11 Z" fill="#dcb67a"></path><path d="M6.6 1.2 H12.6" stroke="#f6ead4" stroke-width="0.9"></path></svg>
<div class="tr" style="left: 109px; top: 393px; transform-origin: 0px 50%; transform: scaleX(0.9493);">Storage</div>
<div class="bx p" style="left:73px;top:417px"></div>
<svg class="fo" style="left:89px;top:414px" viewBox="0 0 14 11"><path d="M0.5 2.6 L4.6 2.6 L5.8 0.2 L13.6 0.2 L13.6 11 L0.5 11 Z" fill="#dcb67a"></path><path d="M6.6 1.2 H12.6" stroke="#f6ead4" stroke-width="0.9"></path></svg>
<div class="tr" style="left: 109px; top: 411px; transform-origin: 0px 50%; transform: scaleX(0.9617);">Security</div>
<!-- oe v scroll -->
<div class="a" style="left:296px;top:159px;width:16px;height:343px;background:#f0f0f0"></div>
<div class="a" style="left:296px;top:176px;width:15px;height:158.500px;background:#cdcdcd"></div>
<svg class="a" style="left:299.500px;top:164.500px;width:8px;height:6.500px" viewBox="0 0 8 6.500"><path d="M0.700 5.600L4 1.600L7.300 5.600" stroke="#505050" stroke-width="1.900" fill="none"></path></svg>
<svg class="a" style="left:299.500px;top:473.800px;width:8px;height:6.500px" viewBox="0 0 8 6.500"><path d="M0.700 0.900L4 4.900L7.300 0.900" stroke="#505050" stroke-width="1.900" fill="none"></path></svg>
<!-- oe h scroll -->
<div class="a" style="left:9px;top:485px;width:303px;height:17px;background:#f0f0f0"></div>
<div class="a" style="left:26px;top:486.500px;width:226px;height:14px;background:#cdcdcd"></div>
<svg class="a" style="left:13.500px;top:489.500px;width:6.500px;height:8px" viewBox="0 0 6.500 8"><path d="M5.600 0.700L1.600 4L5.600 7.300" stroke="#505050" stroke-width="1.900" fill="none"></path></svg>
<svg class="a" style="left:283.500px;top:489.500px;width:6.500px;height:8px" viewBox="0 0 6.500 8"><path d="M0.900 0.700L4.900 4L0.900 7.300" stroke="#505050" stroke-width="1.900" fill="none"></path></svg>

<!-- Document -->
<div class="a" id="doc" style="left:322px;top:131px;width:672px;height:371px;background:#f0f0f0"></div>
<!-- tab -->
<div class="a" style="left:322px;top:110px;width:263px;height:21px;background:#fb6145"></div>
<div class="a" style="left:322px;top:129px;width:672px;height:2px;background:#fb6145"></div>
<div class="t" style="left: 326.5px; top: 113px; font-size: 12px; color: rgb(26, 26, 26); transform-origin: 0px 50%; transform: scaleX(0.9263);">SQLQuery6.sql</div>
<svg class="a" style="left:552px;top:117px;width:8px;height:7px" viewBox="0 0 8 7"><path d="M0 3.400h3.200M3.400 0v7M3.400 1.300h4v3.900H3.400" stroke="#74663c" stroke-width="1" fill="none"></path><path d="M3.400 4.700h4" stroke="#74663c" stroke-width="1.600"></path></svg>
<svg class="a" style="left:570.300px;top:116.200px;width:9.300px;height:7.700px" viewBox="0 0 9.300 7.700"><path d="M0.500 0.300L8.800 7.400M8.800 0.300L0.500 7.400" stroke="#74663c" stroke-width="1.200"></path></svg>
<div class="a" style="left:984px;top:118px;width:0;height:0;border-top:4px solid #f0f2f8;border-left:4px solid transparent;border-right:4px solid transparent"></div>
<!-- editor -->
<div class="a" style="left:322px;top:131px;width:653px;height:122px;background:#fff"></div>
<div class="a" style="left:322px;top:131px;width:18px;height:122px;background:#e6e7e8"></div>
<div class="a" style="left:342.400px;top:131px;width:5.200px;height:112px;background:#ffee62"></div>
<div class="a" style="left:359px;top:227px;width:615px;height:16px;border:2px solid #eaeaf2;border-right:0"></div>
<div class="code" style="left:361.5px;top:132px"><span class="kw">SELECT</span></div>
<div class="code" style="left:361.5px;top:148px">     c<span class="gr">.</span>FirstName</div>
<div class="code" style="left:361.5px;top:164px">    <span class="gr">,</span>c<span class="gr">.</span>LastName</div>
<div class="code" style="left:361.5px;top:180px">    <span class="gr">,</span>c<span class="gr">.</span>Email</div>
<div class="code" style="left:361.5px;top:196px">    <span class="gr">,</span>c<span class="gr">.</span>City</div>
<div class="code" style="left:361.5px;top:212px"><span class="kw">FROM</span> Sales<span class="gr">.</span>Customer c</div>
<div class="code" style="left:361.5px;top:228px"><span class="kw">WHERE</span> c<span class="gr">.</span><span class="kw">State</span> <span class="gr">NOT IN (</span><span class="rd">'NY'</span><span class="gr">);</span></div>
<div class="a" style="left:557.5px;top:229px;width:1px;height:13px;background:#000"></div>
<!-- editor v scroll -->
<div class="a" style="left:975px;top:131px;width:19px;height:139px;background:#e8e8ec"></div>
<div class="a" style="left:975px;top:131px;width:19px;height:16px;background:#eef2fb;border:1px solid #a9b3cc"></div>
<svg class="a" style="left:979px;top:133px;width:11px;height:12px" viewBox="0 0 11 12"><path d="M0 5h11M0 7.2h11M5.5 0.5v4M5.5 7.5v4" stroke="#1e1e1e" stroke-width="1.1"></path><path d="M3.6 2.2L5.5 0L7.4 2.2ZM3.6 9.8L5.5 12L7.4 9.8Z" fill="#1e1e1e"></path></svg>
<div class="a" style="left:980px;top:154px;width:0;height:0;border-bottom:5px solid #868999;border-left:5px solid transparent;border-right:5px solid transparent"></div>
<div class="a" style="left:980px;top:242px;width:0;height:0;border-top:5px solid #868999;border-left:5px solid transparent;border-right:5px solid transparent"></div>
<div class="a" style="left:977px;top:165px;width:4px;height:36px;background:#ffee62"></div>
<div class="a" style="left:981px;top:165px;width:9px;height:36px;background:#c2c3c9"></div>
<div class="a" style="left:975px;top:195px;width:19px;height:2px;background:#0000cd"></div>
<!-- zoom bar / h scroll -->
<div class="a" style="left:322px;top:253px;width:653px;height:17px;background:#e6e7ec"></div>
<div class="a" style="left:322.500px;top:253px;width:60.300px;height:16.500px;background:#fff;border:1px solid #bcc6dd"></div>
<div class="t" style="left: 326.1px; top: 254.4px; font-size: 11px; color: rgb(0, 0, 0); transform-origin: 0px 50%; transform: scaleX(0.9711);">100 %</div>
<div class="a" style="left:374px;top:261px;width:0;height:0;border-top:3px solid #1e1e1e;border-left:3px solid transparent;border-right:3px solid transparent"></div>
<div class="a" style="left:389px;top:256.500px;width:0;height:0;border-right:5px solid #c5c7d0;border-top:5px solid transparent;border-bottom:5px solid transparent"></div>
<div class="a" style="left:964px;top:257px;width:0;height:0;border-left:5px solid #c5c7d0;border-top:5px solid transparent;border-bottom:5px solid transparent"></div>
<!-- result tabs -->
<div class="a" style="left:323px;top:274px;width:73px;height:23px;background:#fff;border:1px solid #dadada;border-bottom:0"></div>
<div class="a" style="left:395px;top:276px;width:79px;height:20px;background:#f0f0f0;border:1px solid #d9d9d9;border-left:0"></div>
<svg class="a" style="left:333px;top:279px;width:13px;height:11px" viewBox="0 0 13 11"><rect x="0.5" y="0.5" width="12" height="10" fill="#fff" stroke="#3c3c3c"></rect><path d="M0.5 1.5h12" stroke="#3c3c3c" stroke-width="2"></path><path d="M0.5 4.5h12M0.5 7.5h12M4.5 1v10M8.5 1v10" stroke="#3c3c3c" stroke-width="1"></path></svg>
<div class="t" style="left: 353.4px; top: 276.8px; font-size: 11px; color: rgb(0, 0, 0); transform-origin: 0px 50%; transform: scaleX(0.9322);">Results</div>
<svg class="a" style="left:401px;top:280px;width:14px;height:13px" viewBox="0 0 14 13"><rect x="0.5" y="3.5" width="7" height="9" fill="#fff" stroke="#3c3c3c"></rect><path d="M2 6.5h4M2 8.5h4M2 10.5h4" stroke="#3c3c3c" stroke-width="1"></path><rect x="8.5" y="0.5" width="5" height="9" fill="#3c3c3c" stroke="#3c3c3c"></rect><path d="M10 2.5h2" stroke="#fff" stroke-width="1"></path></svg>
<div class="t" style="left: 422.2px; top: 279px; font-size: 11px; color: rgb(0, 0, 0); transform-origin: 0px 50%; transform: scaleX(0.9314);">Messages</div>
<!-- grid -->
<div class="a" style="left:327px;top:296px;width:665px;height:180px;background:#fff;border:1px solid #e6e6e6;border-right-color:#fff;border-bottom-color:#fff"></div>
<div class="a" style="left:327px;top:297px;width:664px;height:178px;background:#fff;border:1px solid #a0a0a0;border-right-color:#dcdcdc;border-bottom-color:#b4b9c6"></div>
<div class="hl" style="left:328px;top:316px;width:406px"></div>
<div class="hl" style="left:328px;top:335px;width:406px"></div>
<div class="hl" style="left:328px;top:354px;width:406px"></div>
<div class="hl" style="left:328px;top:373px;width:406px"></div>
<div class="hl" style="left:328px;top:392px;width:406px"></div>
<div class="hl" style="left:328px;top:411px;width:406px"></div>
<div class="hl" style="left:328px;top:430px;width:406px"></div>
<div class="hl" style="left:328px;top:449px;width:406px"></div>
<div class="vl" style="left:359px;top:298px;height:151px"></div>
<div class="vl" style="left:424px;top:298px;height:151px"></div>
<div class="vl" style="left:488px;top:298px;height:151px"></div>
<div class="vl" style="left:639px;top:298px;height:151px"></div>
<div class="vl" style="left:733px;top:298px;height:151px"></div>
<div class="a" style="left:359px;top:316px;width:66px;height:20px;background:#e9edf3;border:1px dotted #000"></div>
<div class="g" style="left: 365px; top: 298px; transform-origin: 0px 50%; transform: scaleX(0.8167);">FirstName</div>
<div class="g" style="left: 430.4px; top: 298px; transform-origin: 0px 50%; transform: scaleX(0.85);">LastName</div>
<div class="g" style="left: 494.2px; top: 298px; transform-origin: 0px 50%; transform: scaleX(0.8029);">Email</div>
<div class="g" style="left: 644.4px; top: 298px; transform-origin: 0px 50%; transform: scaleX(0.7885);">City</div>
<div class="g" style="left:334px;top:317px">1</div>
<div class="g" style="left: 367.7px; top: 317px; transform-origin: 0px 50%; transform: scaleX(0.8257);">Kasha</div>
<div class="g" style="left: 432.2px; top: 317px; transform-origin: 0px 50%; transform: scaleX(0.9258);">Todd</div>
<div class="g" style="left: 495.6px; top: 317px; transform-origin: 0px 50%; transform: scaleX(0.8912);">kasha.todd@yahoo.com</div>
<div class="g" style="left: 646.4px; top: 317px; transform-origin: 0px 50%; transform: scaleX(0.8422);">Campbell</div>
<div class="g" style="left:334px;top:336px">2</div>
<div class="g" style="left: 367.7px; top: 336px; transform-origin: 0px 50%; transform: scaleX(0.8827);">Tameka</div>
<div class="g" style="left: 432.2px; top: 336px; transform-origin: 0px 50%; transform: scaleX(0.8217);">Fisher</div>
<div class="g" style="left: 495.6px; top: 336px; transform-origin: 0px 50%; transform: scaleX(0.8746);">tameka.fisher@aol.com</div>
<div class="g" style="left: 647.3px; top: 336px; transform-origin: 0px 50%; transform: scaleX(0.8922);">Redondo Beach</div>
<div class="g" style="left:334px;top:355px">3</div>
<div class="g" style="left: 366.7px; top: 355px; transform-origin: 0px 50%; transform: scaleX(0.856);">Charolette</div>
<div class="g" style="left: 432.2px; top: 355px; transform-origin: 0px 50%; transform: scaleX(0.8661);">Rice</div>
<div class="g" style="left: 495.6px; top: 355px; transform-origin: 0px 50%; transform: scaleX(0.8772);">charolette.rice@msn.com</div>
<div class="g" style="left: 647.3px; top: 355px; transform-origin: 0px 50%; transform: scaleX(0.8578);">Sacramento</div>
<div class="g" style="left:334px;top:374px">4</div>
<div class="g" style="left: 367.7px; top: 374px; transform-origin: 0px 50%; transform: scaleX(0.8513);">Lashawn</div>
<div class="g" style="left: 431.7px; top: 374px; transform-origin: 0px 50%; transform: scaleX(0.8128);">Ortiz</div>
<div class="g" style="left: 495.6px; top: 374px; transform-origin: 0px 50%; transform: scaleX(0.8671);">lashawn.ortiz@msn.com</div>
<div class="g" style="left: 647.3px; top: 374px; transform-origin: 0px 50%; transform: scaleX(0.8816);">Longview</div>
<div class="g" style="left:334px;top:393px">5</div>
<div class="g" style="left: 366.7px; top: 393px; transform-origin: 0px 50%; transform: scaleX(0.81);">Garry</div>
<div class="g" style="left: 432.2px; top: 393px; transform-origin: 0px 50%; transform: scaleX(0.8446);">Espinoza</div>
<div class="g" style="left: 495.6px; top: 393px; transform-origin: 0px 50%; transform: scaleX(0.8695);">garry.espinoza@hotmail.com</div>
<div class="g" style="left: 647.3px; top: 393px; transform-origin: 0px 50%; transform: scaleX(0.8271);">Forney</div>
<div class="g" style="left:334px;top:412px">6</div>
<div class="g" style="left: 366.9px; top: 412px; transform-origin: 0px 50%; transform: scaleX(0.837);">Aleta</div>
<div class="g" style="left: 432.2px; top: 412px; transform-origin: 0px 50%; transform: scaleX(0.8529);">Shepard</div>
<div class="g" style="left: 495.6px; top: 412px; transform-origin: 0px 50%; transform: scaleX(0.8793);">aleta.shepard@aol.com</div>
<div class="g" style="left: 647.3px; top: 412px; transform-origin: 0px 50%; transform: scaleX(0.862);">Sugar Land</div>
<div class="g" style="left:334px;top:431px">7</div>
<div class="g" style="left: 367.7px; top: 431px; transform-origin: 0px 50%; transform: scaleX(0.8749);">Tobie</div>
<div class="g" style="left: 432.2px; top: 431px; transform-origin: 0px 50%; transform: scaleX(0.8202);">Little</div>
<div class="g" style="left: 495.6px; top: 431px; transform-origin: 0px 50%; transform: scaleX(0.8659);">tobie.little@gmail.com</div>
<div class="g" style="left: 647.3px; top: 431px; transform-origin: 0px 50%; transform: scaleX(0.8518);">Victoria</div>
<!-- grid v scroll -->
<div class="a" style="left:973px;top:298px;width:17px;height:176px;background:#f0f0f0"></div>
<div class="a" style="left:973px;top:315px;width:15px;height:17px;background:#cdcdcd"></div>
<svg class="a" style="left:976px;top:304px;width:9px;height:6px" viewBox="0 0 9 6"><path d="M0.7 5.3L4.5 1.3L8.3 5.3" stroke="#505050" stroke-width="1.5" fill="none"></path></svg>
<svg class="a" style="left:976px;top:463px;width:9px;height:6px" viewBox="0 0 9 6"><path d="M0.7 0.7L4.5 4.7L8.3 0.7" stroke="#505050" stroke-width="1.5" fill="none"></path></svg>
<!-- aggregate bar -->
<div class="a" style="left:328px;top:448px;width:645px;height:26px;background:#d6dbea;border-top:1px solid #9aa5c0"></div>
<div class="ag" style="left: 335.6px; top: 451px; transform-origin: 0px 50%; transform: scaleX(0.8957);">MAX:</div><div class="ag" style="left:366px;top:451px"><b>5</b></div>
<div class="ag" style="left: 402.8px; top: 451px; transform-origin: 0px 50%; transform: scaleX(0.9469);">MIN:</div><div class="ag" style="left:431.5px;top:451px"><b>5</b></div>
<div class="ag" style="left: 468.1px; top: 451px; transform-origin: 0px 50%; transform: scaleX(0.8868);">AVG:</div><div class="ag" style="left: 496.5px; top: 451px; color: rgb(154, 162, 181); transform-origin: 0px 50%; transform: scaleX(0.8994);">NaN</div>
<div class="ag" style="left: 533.6px; top: 451px; transform-origin: 0px 50%; transform: scaleX(0.8582);">SUM:</div><div class="ag" style="left: 563.5px; top: 451px; color: rgb(154, 162, 181); transform-origin: 0px 50%; transform: scaleX(0.8994);">NaN</div>
<div class="ag" style="left: 600.4px; top: 451px; transform-origin: 0px 50%; transform: scaleX(0.9401);">COUNT:</div><div class="ag" style="left:645.5px;top:451px"><b>1</b></div>
<div class="ag" style="left: 681.5px; top: 451px; transform-origin: 0px 50%; transform: scaleX(0.9512);">DISTINCT:</div><div class="ag" style="left:738.5px;top:451px"><b>1</b></div>
<!-- query status -->
<div class="a" style="left:322px;top:480px;width:672px;height:22px;background:#fb6145"></div>
<div class="a" style="left:326.5px;top:483.5px;width:15.5px;height:15.5px;border-radius:8px;background:#2f9e3f;border:1.5px solid #f3f7f0"></div>
<svg class="a" style="left:330px;top:487px;width:9px;height:9px" viewBox="0 0 9 9"><path d="M1 4.8L3.5 7.5L8 1.2" stroke="#fff" stroke-width="1.8" fill="none"></path></svg>
<div class="qs" style="left: 346.4px; top: 480px; font-size: 12px; transform-origin: 0px 50%; transform: scaleX(0.9737);">Query executed successfully.</div>
<div class="qsep" style="left:542px;top:485px"></div>
<div class="qs" style="left: 550px; top: 480px; font-size: 12px; transform-origin: 0px 50%; transform: scaleX(0.95);">localhost (14.0 RTM)</div>
<div class="qsep" style="left:680.5px;top:485px"></div>
<div class="qsep" style="left:772.5px;top:485px"></div>
<div class="qs" style="left: 778px; top: 480px; font-size: 12px; transform-origin: 0px 50%; transform: scaleX(0.9542);">BicycleStoreDev</div>
<div class="qsep" style="left:869.5px;top:485px"></div>
<div class="qs" style="left: 875.5px; top: 480px; font-size: 12px; transform-origin: 0px 50%; transform: scaleX(0.8883);">00:00:00</div>
<div class="qsep" style="left:924.5px;top:485px"></div>
<div class="qs" style="left: 930px; top: 480px; font-size: 12px; transform-origin: 0px 50%; transform: scaleX(0.9445);">426 rows</div>

<div class="a" style="left:322px;top:131px;width:1px;height:371px;background:#b9c3db"></div>
<!-- ============ STATUS BAR ============ -->
<div class="a" id="status">
<svg class="a" style="left:4px;top:7px;width:17px;height:11px" viewBox="0 0 17 11"><path d="M3.2 0.7H16L13.8 10.3H1Z" stroke="#fff" stroke-width="1.150" fill="none"></path></svg>
<div class="t" style="left: 28px; top: 4px; font-size: 12px; color: rgb(255, 255, 255); transform-origin: 0px 50%; transform: scaleX(0.9225);">Ready</div>
<div class="t" style="left: 222.5px; top: 4px; font-size: 12px; color: rgb(255, 255, 255); transform-origin: 0px 50%; transform: scaleX(0.9418);">Ln 3</div>
<div class="t" style="left: 314.5px; top: 4px; font-size: 12px; color: rgb(255, 255, 255); transform-origin: 0px 50%; transform: scaleX(0.9281);">Col 1</div>
<div class="t" style="left: 406.5px; top: 4px; font-size: 12px; color: rgb(255, 255, 255); transform-origin: 0px 50%; transform: scaleX(0.8912);">Ch 1</div>
<div class="t" style="left: 542px; top: 4px; font-size: 12px; color: rgb(255, 255, 255); transform-origin: 0px 50%; transform: scaleX(0.8793);">INS</div>
<svg class="a" style="left:987px;top:10px;width:10px;height:10px" viewBox="0 0 10 10"><g fill="#7fbce6"><rect x="7" y="0" width="1.5" height="1.5"></rect><rect x="4.5" y="2.5" width="1.5" height="1.5"></rect><rect x="7" y="2.5" width="1.5" height="1.5"></rect><rect x="2" y="5" width="1.5" height="1.5"></rect><rect x="4.5" y="5" width="1.5" height="1.5"></rect><rect x="7" y="5" width="1.5" height="1.5"></rect><rect x="0" y="7.5" width="1.5" height="1.5"></rect><rect x="2" y="7.5" width="1.5" height="1.5"></rect><rect x="4.5" y="7.5" width="1.5" height="1.5"></rect><rect x="7" y="7.5" width="1.5" height="1.5"></rect></g></svg>
</div>


</body></html>
